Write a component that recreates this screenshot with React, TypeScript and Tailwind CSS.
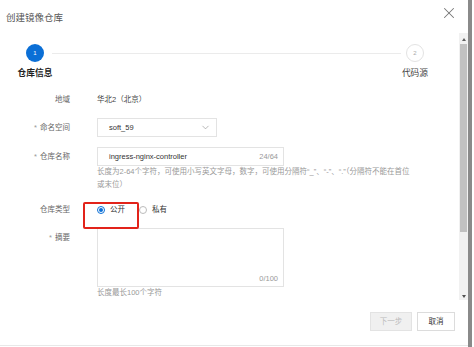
import { ChevronDown, X } from 'lucide-react';
import type { ReactNode } from 'react';

function FormRow({
  label,
  required,
  children,
  className = '',
  labelClass = 'items-center',
}: {
  label: string;
  required?: boolean;
  children: ReactNode;
  className?: string;
  labelClass?: string;
}) {
  return (
    <div className={`flex ${className}`}>
      <div className={`flex w-[70px] shrink-0 justify-end text-[#666] ${labelClass}`}>
        {required && <span className="mr-[3px] text-[#999]">*</span>}
        <span>{label}</span>
      </div>
      <div className="ml-[27px] flex-1">{children}</div>
    </div>
  );
}

export default function App() {
  return (
    <div className="flex h-[347px] w-[474px] overflow-hidden bg-white font-['Liberation_Sans','Noto_Sans_CJK_SC',sans-serif] text-[7.5px] leading-[12px] text-[#333]">
      {/* Dialog */}
      <div className="flex h-[346px] w-[468px] shrink-0 flex-col border-b border-[#e8e8e8]">
        {/* Header */}
        <div className="flex h-[33px] shrink-0 justify-between">
          <div className="pl-[6px] pt-[11px] text-[9.5px] leading-[14px] text-[#555]">创建镜像仓库</div>
          <div className="pr-[10px] pt-[4px] text-[#777]">
            <X size={18} strokeWidth={1.4} />
          </div>
        </div>

        {/* Body with scrollbar */}
        <div className="flex h-[267px] shrink-0">
          <div className="w-[459px] overflow-hidden">
            {/* Steps */}
            <div className="flex items-center pl-[26px] pr-[35px] pt-[11px]">
              <div className="flex h-[18px] w-[18px] items-center justify-center rounded-full bg-[#0b6fd6] text-[6px] text-white">
                1
              </div>
              <div className="ml-[8px] mr-[5px] h-px flex-1 bg-[#ebebeb]" />
              <div className="flex h-[18px] w-[18px] items-center justify-center rounded-full border border-[#e3e3e3] bg-white text-[6px] text-[#aaa]">
                2
              </div>
            </div>
            <div className="mt-[5px] flex h-[12px] justify-between pl-[10px] pr-[19px] text-[8.75px] leading-[12px]">
              <div className="w-[50px] text-center font-bold text-[#222]">仓库信息</div>
              <div className="w-[50px] text-center text-[#444]">代码源</div>
            </div>

            {/* Form */}
            <FormRow label="地域" className="mt-[13px] h-[16px] items-center">
              <div className="flex h-[16px] items-center text-[#444]">华北2（北京）</div>
            </FormRow>

            <FormRow label="命名空间" required className="mt-[10px] h-[19px]">
              <div className="flex h-[19px] w-[120px] items-center justify-between border border-[#e3e3e3] pl-[11px] pr-[5px] text-[#333]">
                <span>soft_59</span>
                <ChevronDown size={11} strokeWidth={1.3} className="text-[#888]" />
              </div>
            </FormRow>

            <FormRow label="仓库名称" required className="mt-[10px]" labelClass="h-[19px] items-center">
              <div className="flex h-[19px] w-[187px] items-center justify-between border border-[#e3e3e3] pl-[11px] pr-[5px]">
                <span>ingress-nginx-controller</span>
                <span className="text-[#999]">24/64</span>
              </div>
              <div className="whitespace-nowrap leading-[12.5px] text-[#999]">
                <div>长度为2-64个字符，可使用小写英文字母，数字，可使用分隔符“_”、“-”、“.”（分隔符不能在首位</div>
                <div>或末位）</div>
              </div>
            </FormRow>

            <FormRow label="仓库类型" className="mt-[11px] h-[16px] items-center">
              <div className="relative flex h-[16px] items-center">
                {/* annotation box */}
                <div className="absolute left-[-14px] top-0 z-10 h-[27px] w-[56px] rounded-[2px] border-2 border-[#e2231a]" />
                <span className="flex h-[8px] w-[8px] items-center justify-center rounded-full border border-[#0b6fd6] bg-white">
                  <span className="h-[4px] w-[4px] rounded-full bg-[#0b6fd6]" />
                </span>
                <span className="ml-[5px] text-[#333]">公开</span>
                <span className="ml-[14px] h-[8px] w-[8px] rounded-full border border-[#bbb] bg-white" />
                <span className="ml-[5px] text-[#333]">私有</span>
              </div>
            </FormRow>

            <FormRow label="摘要" required className="mt-[10px]" labelClass="h-[20px] items-center">
              <div className="flex h-[59px] w-[187px] items-end justify-end border border-[#e3e3e3] pb-[1px] pr-[5px] text-[#999]">
                0/100
              </div>
              <div className="h-[12px] text-[#999]">长度最长100个字符</div>
            </FormRow>
          </div>

          {/* Scrollbar */}
          <div className="flex w-[9px] shrink-0 flex-col items-center bg-[#f1f1f1]">
            <div className="mt-[5px] h-0 w-0 border-x-[2.5px] border-b-[3px] border-x-transparent border-b-[#606060]" />
            <div className="mt-[3px] h-[188px] w-[7px] bg-[#c1c1c1]" />
            <div className="mt-auto mb-[2px] h-0 w-0 border-x-[2.5px] border-t-[3px] border-x-transparent border-t-[#505050]" />
          </div>
        </div>

        {/* Footer */}
        <div className="flex flex-1 justify-end gap-[5px] pr-[13px] pt-[12px]">
          <div className="flex h-[19px] w-[42px] items-center justify-center border border-[#e3e3e3] bg-[#f0f0f0] text-[#bbb]">
            下一步
          </div>
          <div className="flex h-[19px] w-[38px] items-center justify-center border border-[#dcdcdc] bg-white text-[#333]">
            取消
          </div>
        </div>
      </div>

      {/* Backdrop edge */}
      <div className="h-full w-[4px] shrink-0 bg-[#8a8a8a]" />
      <div className="h-full flex-1 bg-white" />
    </div>
  );
}
